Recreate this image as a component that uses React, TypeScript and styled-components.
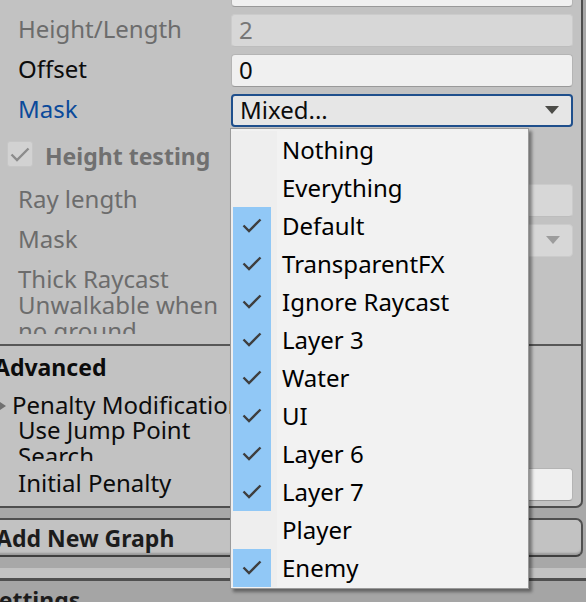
import React from "react";
import styled, { createGlobalStyle, css } from "styled-components";

const GlobalStyle = createGlobalStyle`
  html, body {
    margin: 0;
    padding: 0;
    background: #a8a8a8;
    overflow: hidden;
  }
  body {
    font-family: "Noto Sans", "Open Sans", sans-serif;
    font-size: 24px;
    color: #0c0c0c;
  }
`;

const Page = styled.div`
  width: 586px;
  height: 602px;
  overflow: hidden;
  position: relative;
  background: #a8a8a8;
`;

const GraphBox = styled.div`
  margin-top: -30px;
  width: 581px;
  background: #c2c2c2;
  border-right: 2px solid #4e4e4e;
  border-bottom: 2px solid #4e4e4e;
  border-bottom-right-radius: 7px;
  padding-bottom: 2px;
`;

const Row = styled.div<{ $h?: number; $mt?: number }>`
  display: grid;
  grid-template-columns: 231px 1fr;
  align-items: center;
  height: ${(p) => p.$h ?? 40}px;
  margin-top: ${(p) => p.$mt ?? 0}px;
  padding-right: 8px;
`;

const Label = styled.div<{ $tone?: "dim" | "focus" }>`
  padding-left: 18px;
  padding-bottom: 3px;
  white-space: nowrap;
  color: ${(p) =>
    p.$tone === "dim" ? "#6c6c6c" : p.$tone === "focus" ? "#0b4a9a" : "#0c0c0c"};
`;

const WrapLabel = styled.div<{ $h: number; $tone?: "dim" }>`
  padding-left: 18px;
  width: 200px;
  height: ${(p) => p.$h}px;
  overflow: hidden;
  line-height: 26px;
  color: ${(p) => (p.$tone === "dim" ? "#6c6c6c" : "#0c0c0c")};
`;

const fieldBase = css`
  height: 33px;
  box-sizing: border-box;
  border-radius: 4px;
  padding: 0 7px 2px;
  display: flex;
  align-items: center;
`;

const TextField = styled.div<{ $disabled?: boolean }>`
  ${fieldBase};
  background: ${(p) => (p.$disabled ? "#d7d7d7" : "#f0f0f0")};
  border: 1px solid ${(p) => (p.$disabled ? "#cbcbcb" : "#b4b4b4")};
  border-bottom-color: ${(p) => (p.$disabled ? "#bdbdbd" : "#999")};
  color: ${(p) => (p.$disabled ? "#777" : "#0c0c0c")};
`;

const DropWrap = styled.div`
  position: relative;
`;

const Dropdown = styled.div<{ $focused?: boolean; $disabled?: boolean }>`
  ${fieldBase};
  justify-content: space-between;
  background: ${(p) => (p.$disabled ? "#d7d7d7" : "#e6e6e6")};
  border: ${(p) =>
    p.$focused ? "2px solid #1f4f8c" : "1px solid #cbcbcb"};
  padding-right: 12px;
  color: ${(p) => (p.$disabled ? "#777" : "#0c0c0c")};
`;

const Arrow = styled.span<{ $disabled?: boolean }>`
  width: 0;
  height: 0;
  margin-top: 2px;
  border-left: 7px solid transparent;
  border-right: 7px solid transparent;
  border-top: 8px solid ${(p) => (p.$disabled ? "#9c9c9c" : "#4c4c48")};
`;

const ToggleRow = styled.div`
  display: flex;
  align-items: center;
  gap: 12px;
  height: 50px;
  padding-left: 7px;
  padding-bottom: 2px;
  box-sizing: border-box;
`;

const CheckBox = styled.div`
  width: 26px;
  height: 26px;
  box-sizing: border-box;
  border-radius: 3px;
  background: #d2d2d2;
  border: 1px solid #c6c6c6;
  display: flex;
  align-items: center;
  justify-content: center;
`;

const boldText = css`
  font-weight: 700;
  font-size: 23px;
`;

const ToggleText = styled.span`
  ${boldText};
  color: #707070;
  margin-top: 3px;
`;

const Divider = styled.div`
  margin-top: 10px;
  height: 2px;
  background: #575757;
`;

const SectionHeader = styled.div`
  ${boldText};
  height: 41px;
  padding-top: 1px;
  box-sizing: border-box;
  display: flex;
  align-items: center;
  margin-left: -6px;
`;

const FoldoutRow = styled.div`
  height: 36px;
  display: flex;
  align-items: center;
  gap: 6px;
  white-space: nowrap;
  padding-bottom: 1px;
  box-sizing: border-box;
`;

const FoldTriangle = styled.span`
  width: 0;
  height: 0;
  margin-top: 2px;
  border-top: 4px solid transparent;
  border-bottom: 4px solid transparent;
  border-left: 6px solid #707070;
`;

const AddButton = styled.div`
  ${boldText};
  margin-top: 10px;
  margin-left: -20px;
  width: 603px;
  height: 39px;
  box-sizing: border-box;
  background: #c2c2c2;
  border: 2px solid #505050;
  border-bottom-color: #3f3f3f;
  border-radius: 7px;
  display: flex;
  align-items: center;
  padding-left: 14px;
  padding-top: 1px;
  color: #1c1c1c;
  box-shadow: inset 0 -3px 2px -1px #9a9a9a;
`;

const Strip = styled.div`
  margin-top: 11px;
  height: 10px;
  background: #c2c2c2;
  border-bottom: 3px solid #4f4f4f;
`;

const SettingsHeader = styled.div`
  ${boldText};
  height: 40px;
  background: #a5a5a5;
  color: #1c1c1c;
  margin-left: -14px;
  padding-top: 3px;
`;

const Popup = styled.div`
  position: absolute;
  left: -1px;
  top: calc(100% + 1px);
  width: 297px;
  background: #f2f2f2;
  border: 1px solid #9a9a9a;
  box-shadow: 3px 3px 3px rgba(0, 0, 0, 0.4);
  padding: 2px 0 1px;
  z-index: 10;
  color: #000;
`;

const Item = styled.div`
  display: grid;
  grid-template-columns: 46px 1fr;
  height: 38px;
  align-items: center;
  background: linear-gradient(to right, #eeeeee 46px, #f2f2f2 46px);
`;

const Gutter = styled.div<{ $checked: boolean }>`
  height: 100%;
  margin-left: 2px;
  width: 38px;
  display: flex;
  align-items: center;
  justify-content: center;
  background: ${(p) => (p.$checked ? "#91c8f6" : "transparent")};
`;

const ItemText = styled.span`
  padding-left: 5px;
  white-space: nowrap;
`;

const Check = ({ color }: { color: string }) => (
  <svg width="20" height="15" viewBox="0 0 20 15">
    <path d="M1.5 7.5 L7 13 L18.5 1.5" fill="none" stroke={color} strokeWidth="2.4" />
  </svg>
);

const layers: [string, boolean][] = [
  ["Nothing", false],
  ["Everything", false],
  ["Default", true],
  ["TransparentFX", true],
  ["Ignore Raycast", true],
  ["Layer 3", true],
  ["Water", true],
  ["UI", true],
  ["Layer 6", true],
  ["Layer 7", true],
  ["Player", false],
  ["Enemy", true],
];

export default function App() {
  return (
    <Page>
      <GlobalStyle />
      <GraphBox>
        <Row>
          <Label>Width</Label>
          <TextField>1</TextField>
        </Row>
        <Row>
          <Label $tone="dim">Height/Length</Label>
          <TextField $disabled>2</TextField>
        </Row>
        <Row>
          <Label>Offset</Label>
          <TextField>0</TextField>
        </Row>
        <Row>
          <Label $tone="focus">Mask</Label>
          <DropWrap>
            <Dropdown $focused>
              <span>Mixed...</span>
              <Arrow />
            </Dropdown>
            <Popup>
              {layers.map(([name, on]) => (
                <Item key={name}>
                  <Gutter $checked={on}>{on && <Check color="#3e3e3e" />}</Gutter>
                  <ItemText>{name}</ItemText>
                </Item>
              ))}
            </Popup>
          </DropWrap>
        </Row>
        <ToggleRow>
          <CheckBox>
            <Check color="#8c8c8c" />
          </CheckBox>
          <ToggleText>Height testing</ToggleText>
        </ToggleRow>
        <Row>
          <Label $tone="dim">Ray length</Label>
          <TextField $disabled />
        </Row>
        <Row>
          <Label $tone="dim">Mask</Label>
          <Dropdown $disabled>
            <span />
            <Arrow $disabled />
          </Dropdown>
        </Row>
        <Row>
          <Label $tone="dim">Thick Raycast</Label>
        </Row>
        <Row $h={42} $mt={-8}>
          <WrapLabel $h={42} $tone="dim">
            Unwalkable when no ground
          </WrapLabel>
        </Row>
        <Divider />
        <SectionHeader>Advanced</SectionHeader>
        <FoldoutRow>
          <FoldTriangle />
          <span>Penalty Modifications</span>
        </FoldoutRow>
        <Row $h={44} $mt={-6}>
          <WrapLabel $h={44}>Use Jump Point Search</WrapLabel>
        </Row>
        <Row $mt={3}>
          <Label>Initial Penalty</Label>
          <TextField>0</TextField>
        </Row>
      </GraphBox>
      <AddButton>Add New Graph</AddButton>
      <Strip />
      <SettingsHeader>Settings</SettingsHeader>
    </Page>
  );
}
